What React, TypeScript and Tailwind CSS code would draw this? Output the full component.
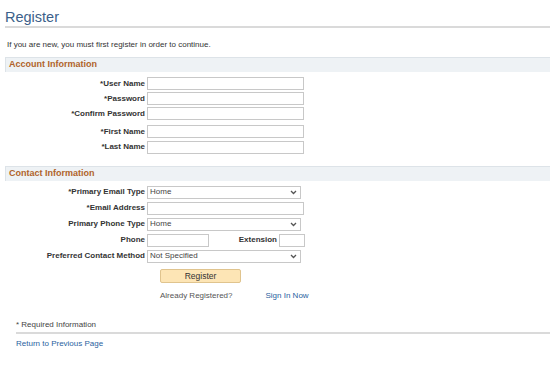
import React from 'react';

const FONT = { fontFamily: '"Liberation Sans", Arial, sans-serif' };

function Label({ children }: { children: React.ReactNode }) {
  return (
    <div className="w-[147px] shrink-0 pr-[2px] text-right text-[8px] font-bold text-[#333]">{children}</div>
  );
}

function TextBox({ w = 'w-[157px]' }: { w?: string }) {
  return <div className={`${w} h-[13px] border border-[#c8c8c8] bg-white`} />;
}

function Select({ value }: { value: string }) {
  return (
    <div className="flex w-[154px] h-[13px] items-center justify-between border border-[#c8c8c8] bg-white pl-[2px] pr-[3px] text-[8px] text-[#444]">
      <span>{value}</span>
      <svg width="7" height="5" viewBox="0 0 7 5">
        <path d="M1 1 L3.5 3.5 L6 1" fill="none" stroke="#555" strokeWidth="1.3" />
      </svg>
    </div>
  );
}

function SectionHeader({ title }: { title: string }) {
  return (
    <div className="ml-[5px] h-[15px] flex items-center border-t border-l border-[#dde3e8] bg-[#eef2f5] pl-[3px] text-[9px] font-bold text-[#b0632a]">
      {title}
    </div>
  );
}

export default function App() {
  return (
    <div className="w-[550px] h-[366px] overflow-hidden bg-white" style={FONT}>
      <div className="ml-[5px] pt-[7px] h-[28px] border-b-2 border-[#dadada] text-[14.5px] text-[#3c5f8a]">Register</div>
      <div className="ml-[7px] mt-[11px] text-[8px] text-[#333]">If you are new, you must first register in order to continue.</div>

      <div className="mt-[6px]">
        <SectionHeader title="Account Information" />
      </div>
      <div className="mt-[4px] flex flex-col">
        <div className="flex items-center h-[15px]"><Label>*User Name</Label><TextBox /></div>
        <div className="flex items-center h-[15px]"><Label>*Password</Label><TextBox /></div>
        <div className="flex items-center h-[15px]"><Label>*Confirm Password</Label><TextBox /></div>
        <div className="flex items-center h-[15px] mt-[3px]"><Label>*First Name</Label><TextBox /></div>
        <div className="flex items-center h-[16px]"><Label>*Last Name</Label><TextBox /></div>
      </div>

      <div className="mt-[11px]">
        <SectionHeader title="Contact Information" />
      </div>
      <div className="mt-[3px] flex flex-col">
        <div className="flex items-center h-[16px]"><Label>*Primary Email Type</Label><Select value="Home" /></div>
        <div className="flex items-center h-[16px]"><Label>*Email Address</Label><TextBox /></div>
        <div className="flex items-center h-[16px]"><Label>Primary Phone Type</Label><Select value="Home" /></div>
        <div className="flex items-center h-[16px]">
          <Label>Phone</Label>
          <TextBox w="w-[62px]" />
          <div className="w-[70px] pr-[2px] text-right text-[8px] font-bold text-[#333]">Extension</div>
          <TextBox w="w-[26px]" />
        </div>
        <div className="flex items-center h-[16px]"><Label>Preferred Contact Method</Label><Select value="Not Specified" /></div>
      </div>

      <div className="mt-[5px] ml-[160px] flex h-[14px] w-[81px] items-center justify-center rounded-[2px] border border-[#e0c48e] bg-[#fde5b5] text-[8.5px] text-[#333]">
        Register
      </div>
      <div className="mt-[7px] flex text-[8px]">
        <span className="ml-[160px] text-[#555]">Already Registered?</span>
        <span className="ml-[33px] text-[#2a5fa0]">Sign In Now</span>
      </div>

      <div className="mt-[17px] ml-[16px] border-b-2 border-[#dadada] pb-[1px] text-[8px] text-[#444]">* Required Information</div>
      <div className="mt-[4px] ml-[16px] text-[8px] text-[#2a5fa0]">Return to Previous Page</div>
    </div>
  );
}
